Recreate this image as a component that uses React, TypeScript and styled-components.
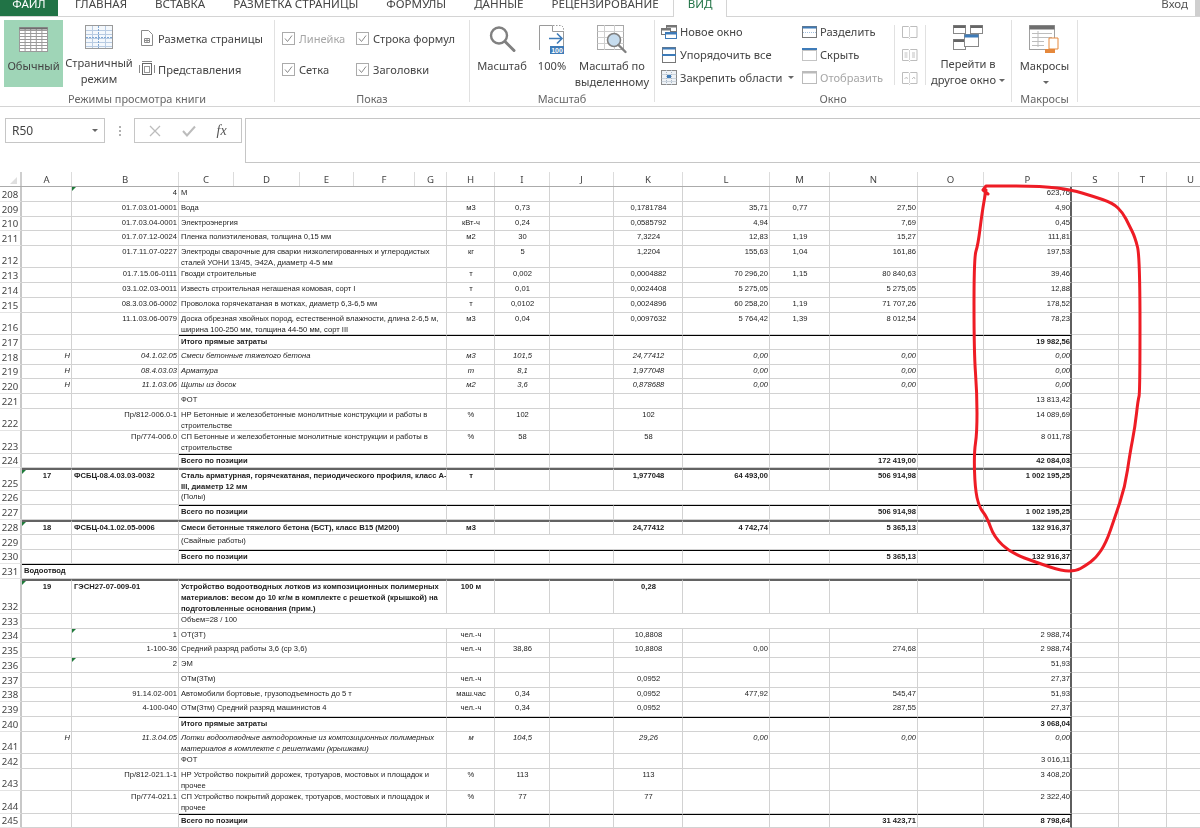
import React from "react";
import styled, { createGlobalStyle } from "styled-components";

const Global = createGlobalStyle`
  html, body { margin: 0; padding: 0; background: #fff; }
  * { box-sizing: border-box; }
`;

const Page = styled.div`
  position: relative;
  width: 1200px;
  height: 828px;
  overflow: hidden;
  background: #fff;
  font-family: "Noto Sans", "Open Sans", sans-serif;
  color: #444;
`;
const Soft = styled.div`
  filter: blur(0.35px);
`;

/* ---------- tabs ---------- */
const TabBar = styled.div`
  display: flex;
  height: 17px;
  border-bottom: 1px solid #d4d4d4;
  font-size: 11.6px;
  line-height: 8px;
`;
const Tab = styled.div<{ $file?: boolean; $active?: boolean }>`
  height: ${(p) => (p.$active ? "17px" : "16px")};
  width: ${(p) => (p.$file ? "58px" : "auto")};
  padding: 0 ${(p) => (p.$file ? "0" : "14px")};
  text-align: center;
  margin-right: ${(p) => (p.$file ? "3px" : "0")};
  color: ${(p) => (p.$file ? "#fff" : p.$active ? "#217346" : "#444")};
  background: ${(p) => (p.$file ? "#217346" : "#fff")};
  border-left: ${(p) => (p.$active ? "1px solid #d4d4d4" : "0")};
  border-right: ${(p) => (p.$active ? "1px solid #d4d4d4" : "0")};
  overflow: hidden;
  white-space: nowrap;
`;
const Login = styled.div`
  margin-left: auto;
  margin-right: 7px;
  font-size: 11.5px;
  color: #555;
`;
const Avatar = styled.div`
  width: 5px;
  height: 16px;
  background: #cfcfcf;
`;

/* ---------- ribbon ---------- */
const Ribbon = styled.div`
  display: flex;
  height: 90px;
  padding-top: 3px;
  border-bottom: 1px solid #d4d4d4;
  font-size: 11.1px;
  color: #444;
`;
const Group = styled.div<{ $w: number }>`
  width: ${(p) => p.$w}px;
  height: 82px;
  flex: none;
  display: flex;
  flex-direction: column;
  border-right: 1px solid #e1e1e1;
`;
const GroupBody = styled.div<{ $pad?: number }>`
  flex: 1;
  display: flex;
  padding-left: ${(p) => p.$pad ?? 0}px;
  min-height: 0;
`;
const GroupLabel = styled.div`
  height: 14px;
  line-height: 14px;
  margin-bottom: -4px;
  text-align: center;
  font-size: 10.9px;
  color: #666;
`;
const Large = styled.div<{ $w: number; $on?: boolean; $ml?: number }>`
  width: ${(p) => p.$w}px;
  height: 67px;
  flex: none;
  margin-left: ${(p) => p.$ml ?? 0}px;
  padding-top: 5px;
  display: flex;
  flex-direction: column;
  align-items: center;
  text-align: center;
  background: ${(p) => (p.$on ? "#9fd5b7" : "transparent")};
  white-space: pre;
  line-height: 16px;
`;
const LargeIcon = styled.div`
  height: 28px;
  margin-bottom: 5px;
  display: flex;
  align-items: center;
  justify-content: center;
`;
const Caret = styled.span`
  display: inline-block;
  margin-left: 3px;
  vertical-align: 2px;
  border-left: 3px solid transparent;
  border-right: 3px solid transparent;
  border-top: 3px solid #666;
`;
const Column = styled.div<{ $w?: number; $ml?: number; $top?: number; $gap?: number }>`
  width: ${(p) => (p.$w ? `${p.$w}px` : "auto")};
  flex: none;
  margin-left: ${(p) => p.$ml ?? 0}px;
  padding-top: ${(p) => p.$top ?? 0}px;
  display: flex;
  flex-direction: column;
  gap: ${(p) => p.$gap ?? 0}px;
`;
const Command = styled.div<{ $off?: boolean; $h: number }>`
  display: flex;
  align-items: center;
  gap: 3px;
  height: ${(p) => p.$h}px;
  white-space: nowrap;
  color: ${(p) => (p.$off ? "#a6a6a6" : "#444")};
  & > svg { flex: none; }
`;
const CheckItem = styled(Command)`
  gap: 4px;
  width: 74px;
`;
const IconSlot = styled.span`
  width: 16px;
  height: 16px;
  display: inline-flex;
  align-items: center;
  justify-content: center;
  flex: none;
`;
const MiniDivider = styled.div`
  width: 1px;
  height: 60px;
  margin-top: 5px;
  background: #e1e1e1;
  flex: none;
`;

/* ---------- formula bar ---------- */
const FormulaBar = styled.div`
  display: flex;
  height: 65px;
  padding: 11px 0 0 5px;
  align-items: flex-start;
`;
const NameBox = styled.div`
  width: 100px;
  height: 25px;
  border: 1px solid #c6c6c6;
  display: flex;
  align-items: center;
  justify-content: space-between;
  padding: 0 6px 0 6px;
  font-size: 12px;
  color: #444;
`;
const Dots = styled.div`
  width: 29px;
  height: 25px;
  display: flex;
  flex-direction: column;
  align-items: center;
  justify-content: center;
  gap: 2px;
  & > i {
    width: 2px;
    height: 2px;
    background: #b0b0b0;
  }
`;
const FormulaButtons = styled.div`
  width: 108px;
  height: 25px;
  border: 1px solid #c6c6c6;
  display: flex;
  align-items: center;
  justify-content: space-around;
  padding: 0 4px;
`;
const FxLabel = styled.span`
  font-family: "Liberation Serif", serif;
  font-style: italic;
  font-size: 14px;
  color: #555;
`;
const FormulaInput = styled.div`
  flex: 1;
  height: 45px;
  margin-left: 3px;
  border: 1px solid #c6c6c6;
  border-right: 0;
`;

/* ---------- sheet ---------- */
const COLUMNS = "22px 50px 107px 55px 66px 54px 61px 32px 48px 55px 64px 69px 87px 60px 88px 66px 88px 47px 48px 48px";

const HeaderRow = styled.div`
  display: grid;
  grid-template-columns: ${COLUMNS};
  height: 15px;
  border-bottom: 1px solid #ababab;
`;
const HeaderCell = styled.div`
  display: flex;
  align-items: center;
  justify-content: center;
  font-size: 9.6px;
  color: #444;
  border-right: 1px solid #dcdcdc;
`;
const Corner = styled(HeaderCell)`
  align-items: flex-end;
  justify-content: flex-end;
  padding: 0 3px 2px 0;
  border-right: 2px solid #cfcfcf;
`;
const CornerMark = styled.span`
  border-left: 7px solid transparent;
  border-bottom: 7px solid #dfdfdf;
`;
const Row = styled.div<{ $h: number }>`
  display: grid;
  grid-template-columns: ${COLUMNS};
  height: ${(p) => p.$h}px;
`;
const RowNumber = styled.div`
  display: flex;
  align-items: flex-end;
  justify-content: center;
  font-size: 9.6px;
  line-height: 12px;
  color: #444;
  border-right: 2px solid #c8c8c8;
  border-bottom: 1px solid #e4e4e4;
`;
type RuleKind = "line" | "heavy" | undefined;
const Cell = styled.div<{
  $span?: number;
  $align?: string;
  $bold?: boolean;
  $italic?: boolean;
  $rule?: RuleKind;
  $edge?: boolean;
}>`
  position: relative;
  grid-column: span ${(p) => p.$span ?? 1};
  min-width: 0;
  padding: 0 ${(p) => (p.$edge ? 0 : 1)}px 0 2px;
  overflow: hidden;
  font-family: "Liberation Sans", Arial, sans-serif;
  font-size: 7.6px;
  line-height: 11px;
  white-space: pre;
  color: #222;
  text-align: ${(p) => p.$align ?? "left"};
  font-weight: ${(p) => (p.$bold ? 700 : 400)};
  font-style: ${(p) => (p.$italic ? "italic" : "normal")};
  border-right: ${(p) => (p.$edge ? "2px solid #5e5e5e" : "1px solid #d2d2d2")};
  border-bottom: 1px solid #d2d2d2;
  border-top: ${(p) =>
    p.$rule === "heavy" ? "2px solid #636363" : p.$rule === "line" ? "1px solid #000" : "0"};
`;
const Flag = styled.span`
  position: absolute;
  left: 0;
  top: 0;
  border-top: 4px solid #1f7a3a;
  border-right: 4px solid transparent;
`;
const Annotation = styled.svg`
  position: absolute;
  left: 0;
  top: 0;
  pointer-events: none;
`;

/* ---------- drawings ---------- */
function SheetGrid({ w, h, cols, rows, fill, line, head }: { w: number; h: number; cols: number; rows: number; fill: string; line: string; head?: string }) {
  const v = Array.from({ length: cols + 1 }, (_, i) => (i * w) / cols);
  const t = Array.from({ length: rows + 1 }, (_, i) => (i * h) / rows);
  return (
    <svg width={w + 1} height={h + 1}>
      <rect x=".5" y=".5" width={w} height={h} fill={fill} stroke={line} />
      {v.map((x) => <line key={`v${x}`} x1={x + 0.5} x2={x + 0.5} y1="0" y2={h} stroke={line} />)}
      {t.map((y) => <line key={`h${y}`} y1={y + 0.5} y2={y + 0.5} x1="0" x2={w} stroke={line} />)}
      {head && <rect x=".5" y=".5" width={w} height="2" fill={head} />}
    </svg>
  );
}
const PageBreakIcon = () => (
  <svg width="29" height="25">
    <rect x=".5" y=".5" width="27" height="23" fill="#f4f8fc" stroke="#9a9a9a" />
    {[5, 9, 13, 17, 21].map((y) => <line key={y} x1="1" x2="27" y1={y + 0.5} y2={y + 0.5} stroke="#b8cbe2" />)}
    {[7, 20].map((x) => <line key={x} x1={x + 0.5} x2={x + 0.5} y1="1" y2="23" stroke="#b8cbe2" />)}
    <line x1="13.5" x2="13.5" y1="1" y2="23" stroke="#7ea6d3" strokeDasharray="2 1" />
    <line x1="1" x2="27" y1="12.5" y2="12.5" stroke="#7ea6d3" strokeDasharray="2 1" />
  </svg>
);
const PageLayoutIcon = () => (
  <svg width="14" height="16">
    <path d="M1.5.5h7l4 4v11h-11z" fill="#fff" stroke="#8a8a8a" />
    <path d="M4.5 8.5h5v4h-5zM7 8.5v4M4.5 10.5h5" fill="none" stroke="#8a8a8a" />
  </svg>
);
const ViewsIcon = () => (
  <svg width="16" height="16">
    <rect x="3.5" y="2.5" width="9" height="11" fill="#fff" stroke="#666" />
    <rect x="5.5" y="5.5" width="5" height="6" fill="none" stroke="#999" />
    <path d="M.5 4v8M15.5 4v8M3 .5h10" stroke="#888" />
  </svg>
);
const Check = () => (
  <svg width="13" height="13">
    <rect x=".5" y=".5" width="12" height="12" fill="#fff" stroke="#ababab" />
    <path d="M3 6.5l2.5 3L10 3.5" fill="none" stroke="#8a8a8a" strokeWidth="1" />
  </svg>
);
const Magnifier = () => (
  <svg width="28" height="28">
    <circle cx="11" cy="10.5" r="8" fill="#fff" stroke="#808080" strokeWidth="2.4" />
    <path d="M17 16.5l9 9" stroke="#808080" strokeWidth="3" strokeLinecap="round" />
  </svg>
);
const HundredIcon = () => (
  <svg width="28" height="30">
    <path d="M1.5 1.5h13l10 0v24h-23z" fill="#fff" stroke="none" />
    <path d="M1.5 26V1.5h13v6h11V26" fill="none" stroke="#9a9a9a" />
    <path d="M15 1.5h8.5l2 2v10" fill="none" stroke="#9a9a9a" strokeDasharray="1.5 1.5" />
    <path d="M11 14.5h13M19 9.5l5 5-5 5" fill="none" stroke="#3e7bb8" strokeWidth="1.6" />
    <rect x="12" y="22" width="14" height="8" fill="#3e7bb8" />
    <text x="19" y="29" textAnchor="middle" fontSize="7" fontWeight="700" fill="#fff" fontFamily="Liberation Sans">100</text>
  </svg>
);
const ZoomSelIcon = () => (
  <svg width="31" height="29">
    <rect x=".5" y=".5" width="26" height="24" fill="#fff" stroke="#a8a8a8" />
    <path d="M.5 6.5h26M.5 12.5h26M.5 18.5h26M7.5 0v25M17.5 0v25" stroke="#cfcfcf" />
    <circle cx="17" cy="15" r="6.5" fill="#c6dcee" stroke="#808080" strokeWidth="1.6" />
    <path d="M21.5 20l7 7" stroke="#808080" strokeWidth="2.4" strokeLinecap="round" />
  </svg>
);
const NewWindowIcon = () => (
  <svg width="16" height="14">
    <rect x="5.5" y=".5" width="10" height="6" fill="#fff" stroke="#777" />
    <rect x="5.5" y=".5" width="10" height="2" fill="#777" />
    <rect x=".5" y="3.5" width="9" height="6" fill="#fff" stroke="#777" />
    <rect x=".5" y="3.5" width="9" height="2" fill="#777" />
    <rect x="4.5" y="7.5" width="11" height="6" fill="#fff" stroke="#3e7bb8" />
    <rect x="4.5" y="7.5" width="11" height="2" fill="#3e7bb8" />
  </svg>
);
const ArrangeIcon = () => (
  <svg width="14" height="16">
    <rect x=".5" y=".5" width="13" height="15" fill="#fff" stroke="#777" />
    <rect x=".5" y=".5" width="13" height="2" fill="#3e7bb8" />
    <rect x="0" y="7" width="14" height="2" fill="#3e7bb8" />
  </svg>
);
const FreezeIcon = () => (
  <svg width="16" height="15">
    <rect x=".5" y=".5" width="15" height="14" fill="#eef2f6" stroke="#8a8a8a" />
    <path d="M.5 4.5h15M.5 8.5h15M.5 11.5h15M5.5 0v15M10.5 0v15" stroke="#a9b6c4" strokeDasharray="1 1" />
    <rect x="6" y="5" width="4" height="3" fill="#3e7bb8" />
  </svg>
);
const SplitIcon = () => (
  <svg width="15" height="12">
    <rect x=".5" y=".5" width="14" height="11" fill="#fff" stroke="#777" />
    <rect x=".5" y=".5" width="14" height="2" fill="#3e7bb8" />
    <path d="M1 6.5h13" stroke="#9fbfdf" strokeDasharray="1 1" />
  </svg>
);
const HideIcon = () => (
  <svg width="15" height="13">
    <rect x="0" y="0" width="15" height="2" fill="#3e7bb8" />
    <rect x=".5" y="2.5" width="14" height="10" fill="none" stroke="#888" strokeDasharray="1 1" />
  </svg>
);
const ShowIcon = () => (
  <svg width="15" height="13">
    <rect x=".5" y=".5" width="14" height="12" fill="#fff" stroke="#bbb" />
    <rect x=".5" y=".5" width="14" height="2" fill="#bbb" />
  </svg>
);
const SideIcon = ({ kind }: { kind: number }) => (
  <svg width="16" height="14">
    <path d="M.5 1.5h6l1 1 1-1h6.500v11h-6.500l-1 1-1-1h-6z" fill="#fff" stroke="#bdbdbd" />
    <path d="M7.500 2v10" stroke="#d4d4d4" />
    {kind === 1 && <path d="M2.500 5h3M2.500 7h3M2.500 9h3M10 5h3M10 7h3M10 9h3" stroke="#c2c2c2" />}
    {kind === 2 && <path d="M2.500 8l2-2 1 2M10 8l2-2 1 2" stroke="#c2c2c2" fill="none" />}
  </svg>
);
const SwitchIcon = () => (
  <svg width="30" height="26">
    <rect x=".5" y=".5" width="12" height="8" fill="#fff" stroke="#888" />
    <rect x=".5" y=".5" width="12" height="2.500" fill="#666" />
    <rect x="17.500" y=".5" width="12" height="8" fill="#fff" stroke="#888" />
    <rect x="17.500" y=".5" width="12" height="2.500" fill="#666" />
    <rect x=".5" y="14.500" width="12" height="10" fill="#fff" stroke="#888" />
    <rect x=".5" y="14.500" width="12" height="2.500" fill="#666" />
    <rect x="11.500" y="9.500" width="14" height="12" fill="#fff" stroke="#888" />
    <rect x="11.500" y="9.500" width="14" height="3" fill="#3e7bb8" />
  </svg>
);
const MacroIcon = () => (
  <svg width="31" height="29">
    <rect x=".5" y=".5" width="25" height="24" fill="#fff" stroke="#a0a0a0" />
    <rect x=".5" y=".5" width="25" height="4" fill="#6e6e6e" />
    <path d="M3 8.500h20M3 12.500h20M3 16.500h12M3 20.500h12M9 6v16" stroke="#bdbdbd" />
    <path d="M20 13h9v11h-9z" fill="#fff" stroke="#e5883c" />
    <path d="M16 24h10v4H16z" fill="#e5883c" />
  </svg>
);
const CrossIcon = () => (
  <svg width="12" height="12"><path d="M1 1l10 10M11 1L1 11" stroke="#bcbcbc" strokeWidth="1.3" /></svg>
);
const TickIcon = () => (
  <svg width="14" height="12"><path d="M1 6l4 4.500L13 1.500" fill="none" stroke="#bcbcbc" strokeWidth="2" /></svg>
);

/* ---------- data ---------- */
const S = 14.75;
const D = 22.4;
const T = 34.6;
type RowData = {
  n: number;
  h: number;
  st?: "b" | "i";
  rule?: "line" | "heavy" | "top";
  a?: string;
  b?: string;
  c?: string;
  v?: string;
  flag?: "a" | "b";
  wide?: boolean;
  full?: boolean;
};
const ROWS: RowData[] = [
  { n: 208, h: S, b: "4", c: "М", v: "||||||||623,76", flag: "b" },
  { n: 209, h: S, b: "01.7.03.01-0001", c: "Вода", v: "м3|0,73||0,1781784|35,71|0,77|27,50||4,90" },
  { n: 210, h: S, b: "01.7.03.04-0001", c: "Электроэнергия", v: "кВт-ч|0,24||0,0585792|4,94||7,69||0,45" },
  { n: 211, h: S, b: "01.7.07.12-0024", c: "Пленка полиэтиленовая, толщина 0,15 мм", v: "м2|30||7,3224|12,83|1,19|15,27||111,81" },
  { n: 212, h: D, b: "01.7.11.07-0227", c: "Электроды сварочные для сварки низколегированных и углеродистых\nсталей УОНИ 13/45, Э42А, диаметр 4-5 мм", v: "кг|5||1,2204|155,63|1,04|161,86||197,53" },
  { n: 213, h: S, b: "01.7.15.06-0111", c: "Гвозди строительные", v: "т|0,002||0,0004882|70 296,20|1,15|80 840,63||39,46" },
  { n: 214, h: S, b: "03.1.02.03-0011", c: "Известь строительная негашеная комовая, сорт I", v: "т|0,01||0,0024408|5 275,05||5 275,05||12,88" },
  { n: 215, h: S, b: "08.3.03.06-0002", c: "Проволока горячекатаная в мотках, диаметр 6,3-6,5 мм", v: "т|0,0102||0,0024896|60 258,20|1,19|71 707,26||178,52" },
  { n: 216, h: D, b: "11.1.03.06-0079", c: "Доска обрезная хвойных пород, естественной влажности, длина 2-6,5 м,\nширина 100-250 мм, толщина 44-50 мм, сорт III", v: "м3|0,04||0,0097632|5 764,42|1,39|8 012,54||78,23" },
  { n: 217, h: S, st: "b", rule: "line", c: "Итого прямые затраты", v: "||||||||19 982,56" },
  { n: 218, h: S, st: "i", a: "Н", b: "04.1.02.05", c: "Смеси бетонные тяжелого бетона", v: "м3|101,5||24,77412|0,00||0,00||0,00" },
  { n: 219, h: S, st: "i", a: "Н", b: "08.4.03.03", c: "Арматура", v: "т|8,1||1,977048|0,00||0,00||0,00" },
  { n: 220, h: S, st: "i", a: "Н", b: "11.1.03.06", c: "Щиты из досок", v: "м2|3,6||0,878688|0,00||0,00||0,00" },
  { n: 221, h: S, c: "ФОТ", v: "||||||||13 813,42" },
  { n: 222, h: D, b: "Пр/812-006.0-1", c: "НР Бетонные и железобетонные монолитные конструкции и работы в\nстроительстве", v: "%|102||102|||||14 089,69" },
  { n: 223, h: D, b: "Пр/774-006.0", c: "СП Бетонные и железобетонные монолитные конструкции и работы в\nстроительстве", v: "%|58||58|||||8 011,78" },
  { n: 224, h: S, st: "b", rule: "line", c: "Всего по позиции", v: "||||||172 419,00||42 084,03" },
  { n: 225, h: D, st: "b", rule: "heavy", a: "17", b: "ФСБЦ-08.4.03.03-0032", c: "Сталь арматурная, горячекатаная, периодического профиля, класс А-\nIII, диаметр 12 мм", v: "т|||1,977048|64 493,00||506 914,98||1 002 195,25", flag: "a" },
  { n: 226, h: S, c: "(Полы)", wide: true },
  { n: 227, h: S, st: "b", rule: "line", c: "Всего по позиции", v: "||||||506 914,98||1 002 195,25" },
  { n: 228, h: S, st: "b", rule: "heavy", a: "18", b: "ФСБЦ-04.1.02.05-0006", c: "Смеси бетонные тяжелого бетона (БСТ), класс В15 (М200)", v: "м3|||24,77412|4 742,74||5 365,13||132 916,37", flag: "a" },
  { n: 229, h: S, c: "(Свайные работы)", wide: true },
  { n: 230, h: S, st: "b", rule: "line", c: "Всего по позиции", v: "||||||5 365,13||132 916,37" },
  { n: 231, h: S, st: "b", rule: "top", a: "Водоотвод", full: true },
  { n: 232, h: T, st: "b", rule: "heavy", a: "19", b: "ГЭСН27-07-009-01", c: "Устройство водоотводных лотков из композиционных полимерных\nматериалов: весом до 10 кг/м в комплекте с решеткой (крышкой) на\nподготовленные основания (прим.)", v: "100 м|||0,28", flag: "a" },
  { n: 233, h: S, c: "Объем=28 / 100", wide: true },
  { n: 234, h: S, b: "1", c: "ОТ(ЗТ)", v: "чел.-ч|||10,8808|||||2 988,74", flag: "b" },
  { n: 235, h: S, b: "1-100-36", c: "Средний разряд работы 3,6 (ср 3,6)", v: "чел.-ч|38,86||10,8808|0,00||274,68||2 988,74" },
  { n: 236, h: S, b: "2", c: "ЭМ", v: "||||||||51,93", flag: "b" },
  { n: 237, h: S, c: "ОТм(ЗТм)", v: "чел.-ч|||0,0952|||||27,37" },
  { n: 238, h: S, b: "91.14.02-001", c: "Автомобили бортовые, грузоподъемность до 5 т", v: "маш.час|0,34||0,0952|477,92||545,47||51,93" },
  { n: 239, h: S, b: "4-100-040", c: "ОТм(Зтм) Средний разряд машинистов 4", v: "чел.-ч|0,34||0,0952|||287,55||27,37" },
  { n: 240, h: S, st: "b", rule: "line", c: "Итого прямые затраты", v: "||||||||3 068,04" },
  { n: 241, h: D, st: "i", a: "Н", b: "11.3.04.05", c: "Лотки водоотводные автодорожные из композиционных полимерных\nматериалов в комплекте с решетками (крышками)", v: "м|104,5||29,26|0,00||0,00||0,00" },
  { n: 242, h: S, c: "ФОТ", v: "||||||||3 016,11" },
  { n: 243, h: D, b: "Пр/812-021.1-1", c: "НР Устройство покрытий дорожек, тротуаров, мостовых и площадок и\nпрочее", v: "%|113||113|||||3 408,20" },
  { n: 244, h: D, b: "Пр/774-021.1", c: "СП Устройство покрытий дорожек, тротуаров, мостовых и площадок и\nпрочее", v: "%|77||77|||||2 322,40" },
  { n: 245, h: S, st: "b", rule: "line", c: "Всего по позиции", v: "||||||31 423,71||8 798,64" },
];
const VALUE_ALIGN = ["center", "center", "center", "center", "right", "center", "right", "right", "right"];
const LETTERS = "ABCDEFGHIJKLMNOPSTU".split("");
const TABS = ["ГЛАВНАЯ", "ВСТАВКА", "РАЗМЕТКА СТРАНИЦЫ", "ФОРМУЛЫ", "ДАННЫЕ", "РЕЦЕНЗИРОВАНИЕ"];

function SheetRow({ r }: { r: RowData }) {
  const bold = r.st === "b";
  const italic = r.st === "i";
  const font = { $bold: bold, $italic: italic };
  const lead: RuleKind = r.rule === "heavy" ? "heavy" : r.rule === "top" ? "line" : undefined;
  const body: RuleKind = r.rule === "heavy" ? "heavy" : r.rule ? "line" : undefined;
  const numeric = r.a && /^\d+$/.test(r.a);
  const bLeft = bold && r.b;
  return (
    <Row $h={r.h}>
      <RowNumber>{r.n}</RowNumber>
      {r.full ? (
        <Cell $span={16} $bold $rule="line" $edge>{r.a}</Cell>
      ) : (
        <>
          <Cell {...font} $rule={lead} $align={numeric ? "center" : "right"}>
            {r.a}
            {r.flag === "a" && <Flag />}
          </Cell>
          <Cell {...font} $rule={lead} $align={bLeft ? "left" : "right"}>
            {r.b}
            {r.flag === "b" && <Flag />}
          </Cell>
          {r.wide ? (
            <Cell $span={14} $edge {...font}>{r.c}</Cell>
          ) : (
            <>
              <Cell $span={5} {...font} $rule={body}>{r.c}</Cell>
              {(r.v ?? "").split("|").concat(Array(9).fill("")).slice(0, 9).map((val, i) => (
                <Cell key={i} {...font} $rule={body} $align={VALUE_ALIGN[i]} $edge={i === 8}>
                  {val}
                </Cell>
              ))}
            </>
          )}
        </>
      )}
      <Cell />
      <Cell />
      <Cell />
    </Row>
  );
}

const RED_POINTS: [number, number][] = [[986, 186], [1042, 186], [1072, 190], [1092, 196], [1113, 203], [1123, 213], [1129, 225], [1135, 237], [1140, 257], [1140, 393], [1138, 400], [1135, 427], [1130, 453], [1125, 487], [1115, 517], [1106, 543], [1096, 558], [1085, 566], [1076, 571], [1062, 571], [1038, 563], [1011, 553], [994, 537], [987, 517], [979, 507], [975, 488], [974, 453], [977, 433], [977, 393], [974, 353], [974, 257], [978, 245], [982, 213], [986, 190]];
const RED = "M983 190L986 186" + RED_POINTS.slice(1).map(([x, y], i) => {
  const [px, py] = RED_POINTS[i];
  return `Q${px} ${py} ${(px + x) / 2} ${(py + y) / 2}`;
}).join("") + "L986 190M983 190L988 194";

export default function App() {
  return (
    <Page>
      <Global />
      <Soft>
        <TabBar>
          <Tab $file>ФАЙЛ</Tab>
          {TABS.map((t) => <Tab key={t}>{t}</Tab>)}
          <Tab $active>ВИД</Tab>
          <Login>Вход</Login>
          <Avatar />
        </TabBar>
        <Ribbon>
          <Group $w={275}>
            <GroupBody $pad={4}>
              <Large $w={59} $on>
                <LargeIcon><SheetGrid w={28} h={24} cols={5} rows={8} fill="#fff" line="#9a9a9a" head="#6e6e6e" /></LargeIcon>
                Обычный
              </Large>
              <Large $w={72}>
                <LargeIcon><PageBreakIcon /></LargeIcon>
                {"Страничный\nрежим"}
              </Large>
              <Column $ml={4} $top={8} $gap={11}>
                <Command $h={20}><IconSlot><PageLayoutIcon /></IconSlot>Разметка страницы</Command>
                <Command $h={20}><IconSlot><ViewsIcon /></IconSlot>Представления</Command>
              </Column>
            </GroupBody>
            <GroupLabel>Режимы просмотра книги</GroupLabel>
          </Group>
          <Group $w={195}>
            <GroupBody $pad={7}>
              <Column $top={8} $gap={11}>
                <CheckItem $h={20} $off><Check />Линейка</CheckItem>
                <CheckItem $h={20}><Check />Сетка</CheckItem>
              </Column>
              <Column $top={8} $gap={11}>
                <CheckItem $h={20}><Check />Строка формул</CheckItem>
                <CheckItem $h={20}><Check />Заголовки</CheckItem>
              </Column>
            </GroupBody>
            <GroupLabel>Показ</GroupLabel>
          </Group>
          <Group $w={185}>
            <GroupBody $pad={6}>
              <Large $w={52}><LargeIcon><Magnifier /></LargeIcon>Масштаб</Large>
              <Large $w={30} $ml={9}><LargeIcon><HundredIcon /></LargeIcon>100%</Large>
              <Large $w={76} $ml={7}><LargeIcon><ZoomSelIcon /></LargeIcon>{"Масштаб по\nвыделенному"}</Large>
            </GroupBody>
            <GroupLabel>Масштаб</GroupLabel>
          </Group>
          <Group $w={357}>
            <GroupBody $pad={6}>
              <Column $w={140} $top={0}>
                <Command $h={23}><IconSlot><NewWindowIcon /></IconSlot>Новое окно</Command>
                <Command $h={23}><IconSlot><ArrangeIcon /></IconSlot>Упорядочить все</Command>
                <Command $h={23}><IconSlot><FreezeIcon /></IconSlot>Закрепить области<Caret /></Command>
              </Column>
              <Column $w={93}>
                <Command $h={23}><IconSlot><SplitIcon /></IconSlot>Разделить</Command>
                <Command $h={23}><IconSlot><HideIcon /></IconSlot>Скрыть</Command>
                <Command $h={23} $off><IconSlot><ShowIcon /></IconSlot>Отобразить</Command>
              </Column>
              <MiniDivider />
              <Column $w={23} $ml={7}>
                <Command $h={23}><IconSlot><SideIcon kind={0} /></IconSlot></Command>
                <Command $h={23}><IconSlot><SideIcon kind={1} /></IconSlot></Command>
                <Command $h={23}><IconSlot><SideIcon kind={2} /></IconSlot></Command>
              </Column>
              <MiniDivider />
              <Large $w={84}>
                <LargeIcon><SwitchIcon /></LargeIcon>
                <span>Перейти в<br />другое окно<Caret /></span>
              </Large>
            </GroupBody>
            <GroupLabel>Окно</GroupLabel>
          </Group>
          <Group $w={66}>
            <GroupBody>
              <Large $w={65}>
                <LargeIcon><MacroIcon /></LargeIcon>
                <span>Макросы<br /><Caret /></span>
              </Large>
            </GroupBody>
            <GroupLabel>Макросы</GroupLabel>
          </Group>
        </Ribbon>
        <FormulaBar>
          <NameBox>R50<Caret /></NameBox>
          <Dots><i /><i /><i /></Dots>
          <FormulaButtons>
            <CrossIcon />
            <TickIcon />
            <FxLabel>fx</FxLabel>
          </FormulaButtons>
          <FormulaInput />
        </FormulaBar>
        <HeaderRow>
          <Corner><CornerMark /></Corner>
          {LETTERS.map((l) => <HeaderCell key={l}>{l}</HeaderCell>)}
        </HeaderRow>
        {ROWS.map((r) => <SheetRow key={r.n} r={r} />)}
      </Soft>
      <Annotation width="1200" height="828" viewBox="0 0 1200 828">
        <path d={RED} fill="none" stroke="#ee1c25" strokeWidth="3" strokeLinejoin="round" strokeLinecap="round" />
      </Annotation>
    </Page>
  );
}
